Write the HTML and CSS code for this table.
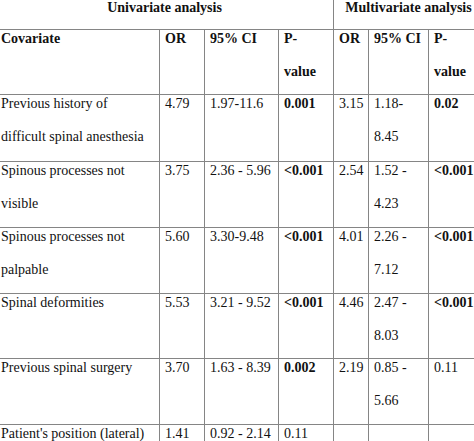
FILE: index.html
```html
<!DOCTYPE html>
<html lang="en">
<head>
<meta charset="utf-8">
<title>Univariate and multivariate analysis</title>
<link rel="stylesheet" href="styles.css">
</head>
<body>
<div class="table">
  <div class="cell top span4"><div class="in b">Univariate analysis</div></div>
  <div class="cell top span3"><div class="in b">Multivariate analysis</div></div>

  <div class="cell"><div class="in b">Covariate</div></div>
  <div class="cell"><div class="in b">OR</div></div>
  <div class="cell"><div class="in b">95% CI</div></div>
  <div class="cell"><div class="in b">P-<br>value</div></div>
  <div class="cell"><div class="in b">OR</div></div>
  <div class="cell"><div class="in b">95% CI</div></div>
  <div class="cell"><div class="in b">P-<br>value</div></div>

  <div class="cell"><div class="in">Previous history of<br>difficult spinal anesthesia</div></div>
  <div class="cell"><div class="in">4.79</div></div>
  <div class="cell"><div class="in">1.97-11.6</div></div>
  <div class="cell"><div class="in b">0.001</div></div>
  <div class="cell"><div class="in">3.15</div></div>
  <div class="cell"><div class="in">1.18-<br>8.45</div></div>
  <div class="cell"><div class="in b">0.02</div></div>

  <div class="cell"><div class="in">Spinous processes not<br>visible</div></div>
  <div class="cell"><div class="in">3.75</div></div>
  <div class="cell"><div class="in">2.36 - 5.96</div></div>
  <div class="cell"><div class="in b">&lt;0.001</div></div>
  <div class="cell"><div class="in">2.54</div></div>
  <div class="cell"><div class="in">1.52 -<br>4.23</div></div>
  <div class="cell"><div class="in b">&lt;0.001</div></div>

  <div class="cell"><div class="in">Spinous processes not<br>palpable</div></div>
  <div class="cell"><div class="in">5.60</div></div>
  <div class="cell"><div class="in">3.30-9.48</div></div>
  <div class="cell"><div class="in b">&lt;0.001</div></div>
  <div class="cell"><div class="in">4.01</div></div>
  <div class="cell"><div class="in">2.26 -<br>7.12</div></div>
  <div class="cell"><div class="in b">&lt;0.001</div></div>

  <div class="cell"><div class="in">Spinal deformities</div></div>
  <div class="cell"><div class="in">5.53</div></div>
  <div class="cell"><div class="in">3.21 - 9.52</div></div>
  <div class="cell"><div class="in b">&lt;0.001</div></div>
  <div class="cell"><div class="in">4.46</div></div>
  <div class="cell"><div class="in">2.47 -<br>8.03</div></div>
  <div class="cell"><div class="in b">&lt;0.001</div></div>

  <div class="cell"><div class="in">Previous spinal surgery</div></div>
  <div class="cell"><div class="in">3.70</div></div>
  <div class="cell"><div class="in">1.63 - 8.39</div></div>
  <div class="cell"><div class="in b">0.002</div></div>
  <div class="cell"><div class="in">2.19</div></div>
  <div class="cell"><div class="in">0.85 -<br>5.66</div></div>
  <div class="cell"><div class="in">0.11</div></div>

  <div class="cell"><div class="in">Patient's position (lateral)</div></div>
  <div class="cell"><div class="in">1.41</div></div>
  <div class="cell"><div class="in">0.92 - 2.14</div></div>
  <div class="cell"><div class="in">0.11</div></div>
  <div class="cell"></div>
  <div class="cell"></div>
  <div class="cell"></div>
</div>
</body>
</html>
```
FILE: styles.css
```css
html, body {
  margin: 0;
  padding: 0;
  background: #fff;
  overflow: hidden;
}

body {
  width: 474px;
  height: 441px;
}

.table {
  display: grid;
  grid-template-columns: 163px 44px 73px 54px 34px 59px 54px;
  grid-template-rows: 29px 64px 66px 65px 65px 64px 65px 65px;
  gap: 1px;
  background: #858585;
  margin-left: -4px;
  width: 487px;
  font-family: "Liberation Serif", "Times New Roman", serif;
  font-size: 14px;
  line-height: 33px;
  color: #111;
}

.cell {
  background: #fff;
  padding: 0 0 0 5px;
  overflow: hidden;
  white-space: nowrap;
}

.in {
  margin-top: -8px;
}

.b {
  font-weight: bold;
}

.top {
  padding: 0;
  text-align: center;
  overflow: visible;
}

.top .in {
  margin-top: -9px;
}

.span4 {
  grid-column: span 4;
}

.span3 {
  grid-column: span 3;
}
```
